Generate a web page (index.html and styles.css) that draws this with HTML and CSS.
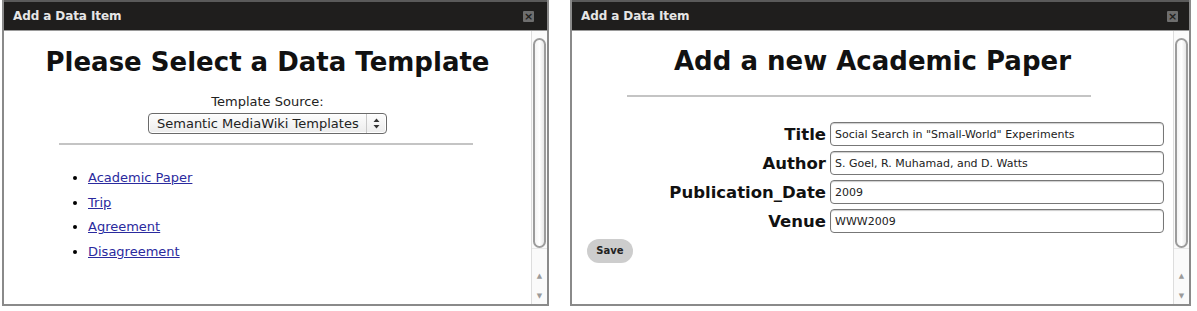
FILE: index.html
```html
<!DOCTYPE html>
<html>
<head>
<meta charset="utf-8">
<link rel="stylesheet" href="styles.css">
</head>
<body>
<div class="stage">
  <div class="dialog dialog-left">
    <div class="titlebar">
      <span class="title">Add a Data Item</span>
      <span class="close">&#215;</span>
    </div>
    <div class="body">
      <div class="content">
        <h1 class="heading h-left">Please Select a Data Template</h1>
        <div class="source-label">Template Source:</div>
        <div class="select-wrap">
          <div class="select">
            <span class="select-text">Semantic MediaWiki Templates</span>
            <span class="select-arrows">
              <svg width="7" height="11" viewBox="0 0 7 11"><path d="M3.5 0.5 L6.5 4 L0.5 4 Z M3.5 10.5 L6.5 7 L0.5 7 Z" fill="#333"/></svg>
            </span>
          </div>
        </div>
        <div class="rule rule-left"></div>
        <ul class="list">
          <li><a href="#">Academic Paper</a></li>
          <li><a href="#">Trip</a></li>
          <li><a href="#">Agreement</a></li>
          <li><a href="#">Disagreement</a></li>
        </ul>
      </div>
      <div class="scrollbar">
        <div class="track"><div class="thumb"></div></div>
        <div class="arrows">
          <span class="arr">&#9650;</span>
          <span class="arr">&#9660;</span>
        </div>
      </div>
    </div>
  </div>

  <div class="dialog dialog-right">
    <div class="titlebar">
      <span class="title">Add a Data Item</span>
      <span class="close">&#215;</span>
    </div>
    <div class="body">
      <div class="content">
        <h1 class="heading h-right">Add a new Academic Paper</h1>
        <div class="rule rule-right"></div>
        <div class="form">
          <label class="lbl">Title</label>
          <div class="field">Social Search in "Small-World" Experiments</div>
          <label class="lbl">Author</label>
          <div class="field">S. Goel, R. Muhamad, and D. Watts</div>
          <label class="lbl">Publication_Date</label>
          <div class="field">2009</div>
          <label class="lbl">Venue</label>
          <div class="field">WWW2009</div>
        </div>
        <div class="save-row"><span class="save">Save</span></div>
      </div>
      <div class="scrollbar">
        <div class="track"><div class="thumb"></div></div>
        <div class="arrows">
          <span class="arr">&#9650;</span>
          <span class="arr">&#9660;</span>
        </div>
      </div>
    </div>
  </div>
</div>
</body>
</html>
```

FILE: styles.css
```css
* { box-sizing: border-box; }
html, body { margin: 0; padding: 0; background: #fff; }
body { font-family: "DejaVu Sans", "Liberation Sans", sans-serif; width: 1197px; height: 311px; overflow: hidden; }

.stage { display: flex; gap: 21px; padding-left: 2px; }

.dialog {
  height: 306px;
  display: flex;
  flex-direction: column;
  border-left: 2px solid #8a8a8a;
  border-right: 2px solid #8a8a8a;
  border-bottom: 2px solid #8a8a8a;
  background: #fff;
}
.dialog-left { width: 547px; }
.dialog-right { width: 621px; }

.titlebar {
  height: 31px;
  flex: none;
  background: #1f1e1d;
  border-top: 2px solid #5a5a5a;
  border-bottom: 1px solid #9a9a9a;
  display: flex;
  align-items: center;
  justify-content: space-between;
  padding: 0 13px 0 9px;
}
.title { color: #e6e6e6; font-size: 12px; font-weight: bold; letter-spacing: -0.1px; }
.close {
  width: 11px; height: 11px;
  background: #6e6e6e;
  color: #1f1e1d;
  font-size: 11px;
  line-height: 11px;
  text-align: center;
  font-weight: bold;
  border-radius: 1px;
}
.dialog-right .titlebar { padding-right: 11px; }

.body { flex: 1; display: flex; min-height: 0; }
.content { flex: 1; min-width: 0; }

.scrollbar {
  width: 16px;
  flex: none;
  display: flex;
  flex-direction: column;
  border-left: 1px solid #ddd;
  background: #fafafa;
  padding-top: 7px;
}
.track { flex: 1; padding: 0 1px; }
.thumb {
  height: 210px;
  border: 2px solid #9c9c9c;
  border-radius: 8px;
  background: linear-gradient(to right, #f4f4f4, #fff, #e8e8e8);
}
.arrows {
  height: 58px;
  display: flex;
  flex-direction: column;
  align-items: center;
  justify-content: flex-end;
  gap: 12px;
  padding-bottom: 4px;
  border-top: 1px solid #e8e8e8;
}
.arr { font-size: 7px; color: #9a9a9a; line-height: 8px; }

.heading { margin: 0; text-align: center; font-weight: bold; color: #111; }
.h-left { font-size: 26px; padding-top: 16px; line-height: 30px; }
.h-right { font-size: 26px; padding-top: 15px; line-height: 30px; }

.source-label { text-align: center; font-size: 13px; color: #222; margin-top: 17px; line-height: 16px; }
.select-wrap { display: flex; justify-content: center; margin-top: 3px; }
.select {
  width: 239px;
  height: 21px;
  border: 1px solid #6a6a6a;
  border-radius: 4px;
  display: flex;
  align-items: center;
  background: linear-gradient(#fdfdfd, #ececec);
  font-size: 13px;
  color: #222;
  box-shadow: inset 0 0 0 1px #fff;
}
.select-text { flex: 1; padding-left: 8px; white-space: nowrap; }
.select-arrows {
  width: 20px; height: 19px;
  border-left: 1px solid #c8c8c8;
  display: flex; align-items: center; justify-content: center;
}

.rule { height: 2px; background: #c4c4c4; }
.rule-left { margin: 9px 58px 0 55px; }
.rule-right { margin: 19px 82px 0 55px; }

.list { margin: 21px 0 0 0; padding-left: 84px; font-size: 13px; line-height: 24.7px; }
.list a { color: #2a2a9e; }

.form {
  display: grid;
  grid-template-columns: 254px 334px;
  column-gap: 4px;
  row-gap: 5px;
  margin-top: 25px;
}
.lbl { text-align: right; font-weight: bold; font-size: 16.5px; color: #111; align-self: center; }
.field {
  height: 24px;
  border: 1px solid #777;
  border-radius: 4px;
  font-size: 11px;
  padding-left: 4px;
  display: flex;
  align-items: center;
  color: #222;
  box-shadow: inset 0 1px 1px #ccc;
}

.save-row { padding-left: 15px; margin-top: 6px; }
.save {
  display: inline-block;
  width: 46px;
  height: 24px;
  line-height: 24px;
  text-align: center;
  background: #cdcdcd;
  border-radius: 12px;
  font-size: 10px;
  font-weight: bold;
  color: #222;
}
```
